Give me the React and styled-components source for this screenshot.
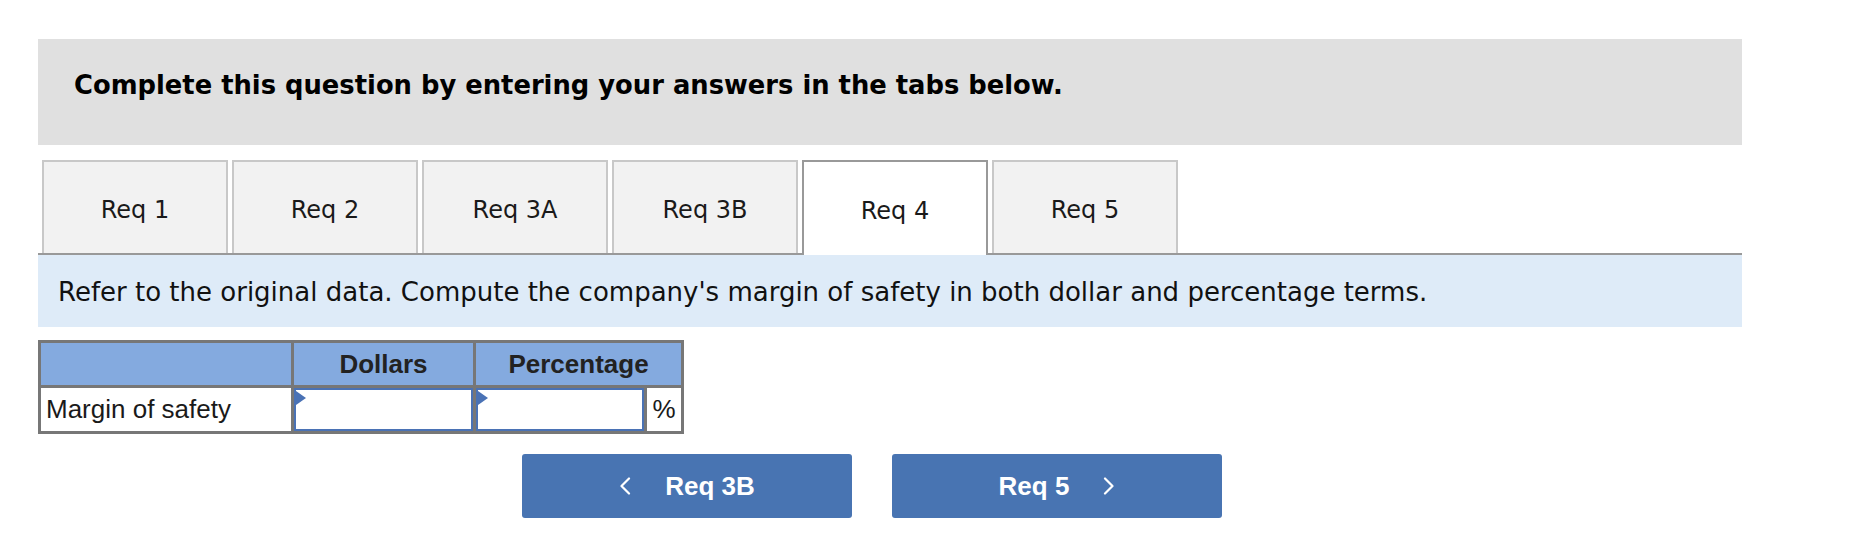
import styled, { createGlobalStyle } from 'styled-components';

const GlobalStyle = createGlobalStyle`
  body {
    margin: 0;
    background: #fff;
    font-family: "DejaVu Sans", Verdana, sans-serif;
    color: #111;
  }
`;

const tabs = ['Req 1', 'Req 2', 'Req 3A', 'Req 3B', 'Req 4', 'Req 5'];

const ChevronIcon = ({ dir }) => (
  <svg width="12" height="18" viewBox="0 0 12 18" fill="none">
    <polyline
      points={dir === 'left' ? '10,1.5 2.5,9 10,16.5' : '2,1.5 9.5,9 2,16.5'}
      stroke="#fff"
      strokeWidth="2.2"
      strokeLinecap="round"
      strokeLinejoin="round"
    />
  </svg>
);

export default function App() {
  return (
    <Page>
      <GlobalStyle />
      <Banner>Complete this question by entering your answers in the tabs below.</Banner>

      <TabBar>
        {tabs.map(t => (
          <Tab key={t} $active={t === 'Req 4'}>
            {t}
          </Tab>
        ))}
      </TabBar>

      <Prompt>
        Refer to the original data. Compute the company's margin of safety in both dollar and
        percentage terms.
      </Prompt>

      <AnswerTable>
        <colgroup>
          <col style={{ width: 253 }} />
          <col style={{ width: 182 }} />
          <col style={{ width: 171 }} />
          <col style={{ width: 37 }} />
        </colgroup>
        <thead>
          <tr>
            <HeadCell />
            <HeadCell>Dollars</HeadCell>
            <HeadCell colSpan={2}>Percentage</HeadCell>
          </tr>
        </thead>
        <tbody>
          <tr>
            <LabelCell>Margin of safety</LabelCell>
            <InputCell>
              <AnswerInput />
            </InputCell>
            <InputCell>
              <AnswerInput />
            </InputCell>
            <UnitCell>%</UnitCell>
          </tr>
        </tbody>
      </AnswerTable>

      <NavRow>
        <NavButton>
          <ChevronIcon dir="left" />
          <span>Req 3B</span>
        </NavButton>
        <NavButton>
          <span>Req 5</span>
          <ChevronIcon dir="right" />
        </NavButton>
      </NavRow>
    </Page>
  );
}

const Page = styled.div`
  width: 1704px;
  padding: 39px 0 0 38px;
`;

const Banner = styled.div`
  height: 106px;
  box-sizing: border-box;
  background: #e0e0e0;
  padding: 0 36px 15px;
  display: flex;
  align-items: center;
  font-size: 25.8px;
  font-weight: bold;
  color: #000;
`;

const TabBar = styled.div`
  display: flex;
  align-items: flex-end;
  gap: 4px;
  margin-top: 15px;
  padding-left: 4px;
  border-bottom: 2px solid #999;
`;

const Tab = styled.div`
  width: 186px;
  height: ${p => (p.$active ? '95px' : '93px')};
  margin-bottom: ${p => (p.$active ? '-2px' : '0')};
  box-sizing: border-box;
  padding-top: 4px;
  border: 2px solid ${p => (p.$active ? '#999' : '#c8c8c8')};
  border-bottom: ${p => (p.$active ? 'none' : '0')};
  background: ${p => (p.$active ? '#fff' : '#f2f2f2')};
  display: flex;
  align-items: center;
  justify-content: center;
  font-size: 24px;
  color: #1a1a1a;
  position: relative;
`;

const Prompt = styled.div`
  height: 72px;
  box-sizing: border-box;
  background: #deebf8;
  padding: 2px 0 0 20px;
  display: flex;
  align-items: center;
  font-size: 26px;
  color: #111;
`;

const AnswerTable = styled.table`
  margin-top: 13px;
  border-collapse: collapse;
  table-layout: fixed;
  width: 643px;
  font-family: "Liberation Sans", Arial, sans-serif;
  font-size: 26px;
  color: #1a1a1a;
  border: 3px solid #777;
  td,
  th {
    border: 3px solid #777;
    padding: 0;
  }
`;

const HeadCell = styled.th`
  height: 42px;
  background: #84aadf;
  font-weight: bold;
  text-align: center;
  color: #222;
`;

const LabelCell = styled.td`
  height: 43px;
  padding-left: 5px !important;
  background: #fff;
  text-align: left;
`;

const InputCell = styled.td`
  position: relative;
  background: #fff;
  &::before {
    content: '';
    position: absolute;
    top: 3px;
    left: 2px;
    border-top: 7px solid transparent;
    border-bottom: 7px solid transparent;
    border-left: 10px solid #4a72b5;
  }
`;

const AnswerInput = styled.input`
  display: block;
  width: 100%;
  height: 43px;
  box-sizing: border-box;
  border: 2px solid #4a72b5;
  background: #fff;
  outline: none;
`;

const UnitCell = styled.td`
  text-align: center;
  background: #fff;
`;

const NavRow = styled.div`
  display: flex;
  gap: 40px;
  margin-top: 20px;
  padding-left: 484px;
`;

const NavButton = styled.button`
  width: 330px;
  height: 64px;
  border: none;
  border-radius: 3px;
  background: #4874b2;
  color: #fff;
  font-family: "Liberation Sans", Arial, sans-serif;
  font-weight: bold;
  font-size: 26px;
  display: flex;
  align-items: center;
  justify-content: center;
  gap: 34px;
  cursor: pointer;
`;
